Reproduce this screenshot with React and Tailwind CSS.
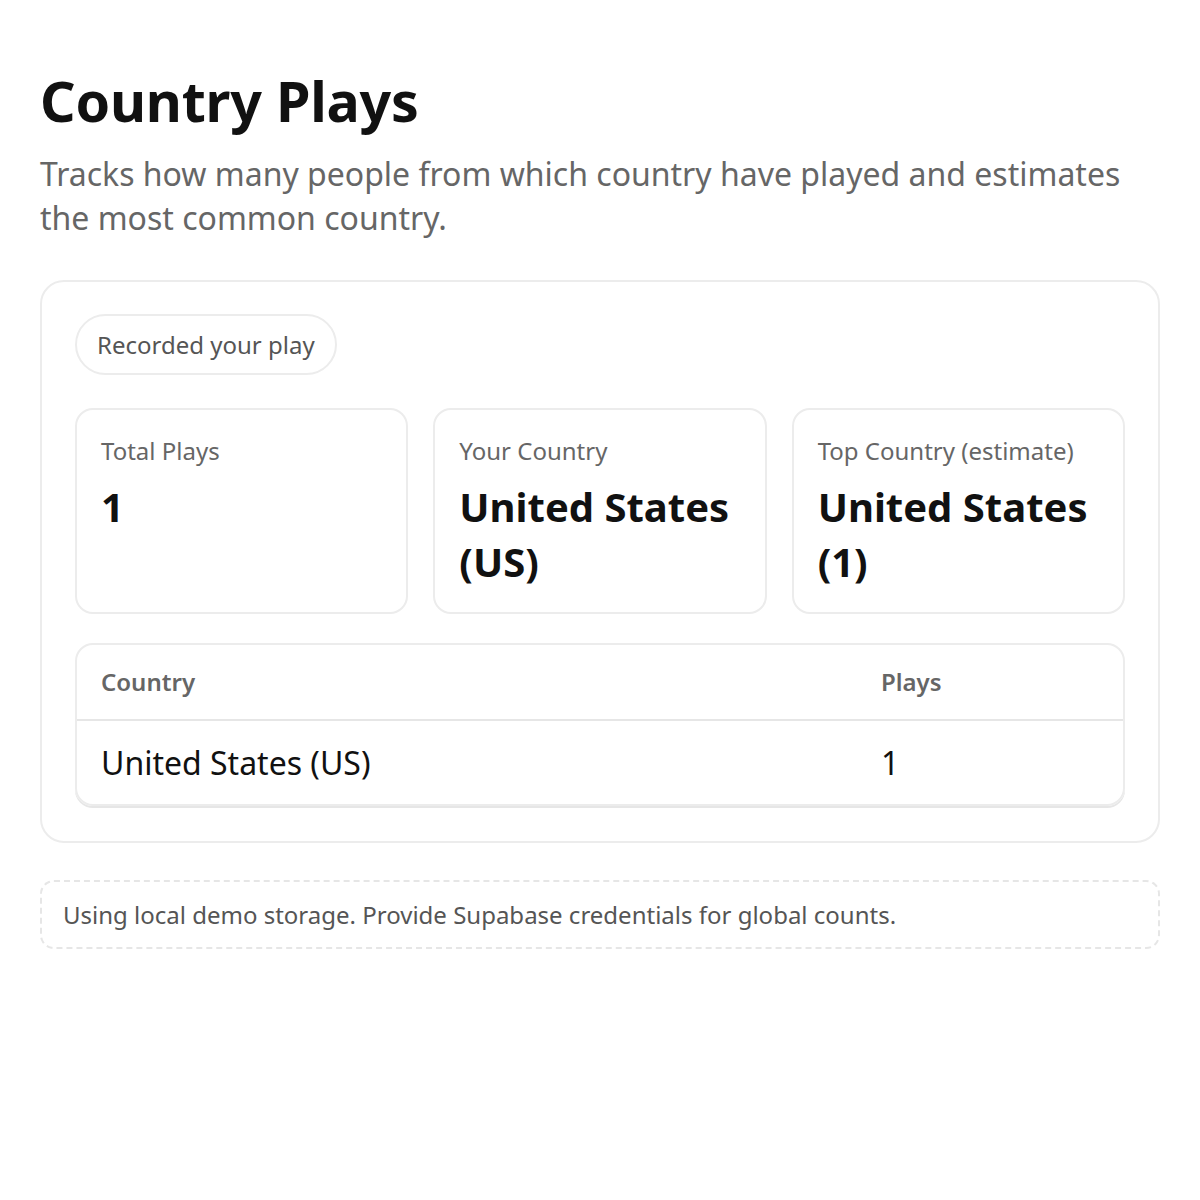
import React from 'react';

const stats = [
  { label: 'Total Plays', value: '1' },
  { label: 'Your Country', value: 'United States (US)' },
  { label: 'Top Country (estimate)', value: 'United States (1)' },
];

const rows = [{ country: 'United States (US)', plays: 1 }];

export default function App() {
  return (
    <div className="min-h-screen bg-white px-10 pt-[68px] font-['Noto_Sans',sans-serif] text-[#111]">
      {/* Header */}
      <h1 className="text-[55.5px] font-bold leading-[66px] tracking-[-0.2px]">Country Plays</h1>
      <p className="mt-[18px] text-[32px] leading-[44px] text-[#666]">
        Tracks how many people from which country have played and estimates the most common country.
      </p>

      {/* Main card */}
      <div className="mt-[40px] rounded-[24px] border-2 border-[#ececec] px-[33px] pt-[32px] pb-[35px]">
        <span className="inline-flex h-[61px] items-center rounded-full border-2 border-[#ececec] px-[20px] text-[24px] text-[#555]">
          Recorded your play
        </span>

        <div className="mt-[33px] grid grid-cols-3 gap-[25px]">
          {stats.map((s) => (
            <div key={s.label} className="h-[206px] rounded-[18px] border-2 border-[#ececec] px-[24px] pt-[25px]">
              <div className="text-[24px] leading-[32px] text-[#666]">{s.label}</div>
              <div className="mt-[12px] text-[40px] font-bold leading-[55px] text-[#111]">{s.value}</div>
            </div>
          ))}
        </div>

        {/* Table */}
        <div className="mt-[29px] overflow-hidden rounded-[18px] border-2 border-[#ececec] shadow-[0_2px_0_#e6e6e6]">
          <table className="w-full border-collapse text-left">
            <thead>
              <tr className="border-b-2 border-[#e6e6e6]">
                <th className="h-[75px] px-[24px] text-[24px] font-semibold text-[#666]">Country</th>
                <th className="h-[75px] w-[242px] px-0 text-[24px] font-semibold text-[#666]">Plays</th>
              </tr>
            </thead>
            <tbody>
              {rows.map((r) => (
                <tr key={r.country}>
                  <td className="h-[84px] px-[24px] text-[32px] text-[#111]">{r.country}</td>
                  <td className="h-[84px] px-0 text-[32px] text-[#111]">{r.plays}</td>
                </tr>
              ))}
            </tbody>
          </table>
        </div>
      </div>

      {/* Storage note */}
      <div className="mt-[37px] flex h-[69px] items-center rounded-[14px] border-2 border-dashed border-[#e6e6e6] px-[21px] text-[24px] text-[#555]">
        Using local demo storage. Provide Supabase credentials for global counts.
      </div>
    </div>
  );
}
